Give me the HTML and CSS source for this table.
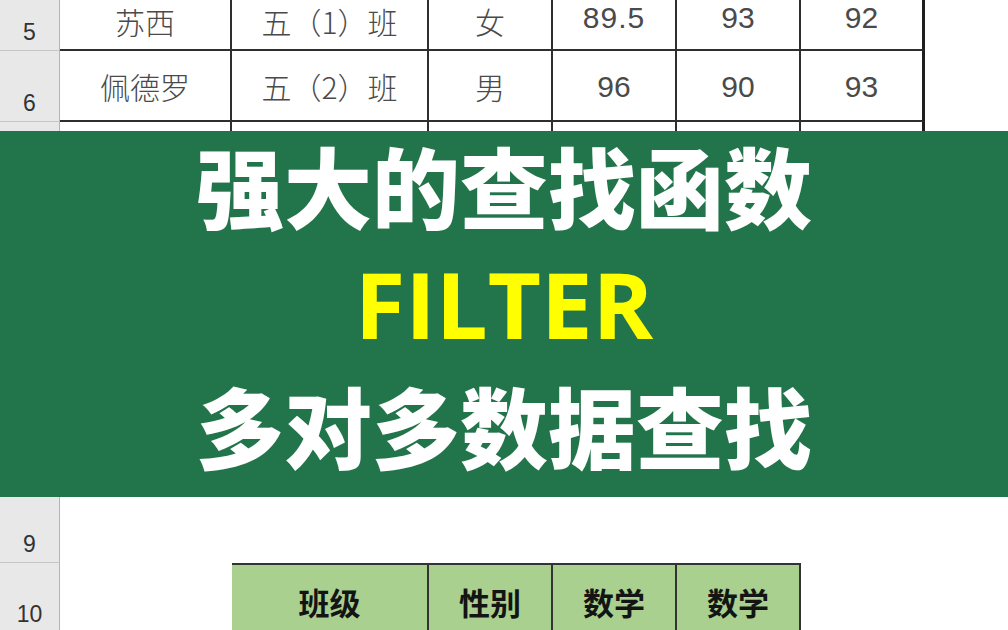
FILE: index.html
```html
<!DOCTYPE html>
<html lang="zh-CN">
<head>
<meta charset="utf-8">
<title>FILTER 多对多数据查找</title>
<link rel="stylesheet" href="styles.css">
</head>
<body>
<div class="sheet">
  <div class="row r5">
    <div class="rh">5</div>
    <div class="c cn">苏西</div>
    <div class="c cn">五（1）班</div>
    <div class="c cn">女</div>
    <div class="c num mono">89.5</div>
    <div class="c num">93</div>
    <div class="c num last">92</div>
    <div class="blank"></div>
  </div>
  <div class="row r6">
    <div class="rh">6</div>
    <div class="c cn">佩德罗</div>
    <div class="c cn">五（2）班</div>
    <div class="c cn">男</div>
    <div class="c num">96</div>
    <div class="c num">90</div>
    <div class="c num last">93</div>
    <div class="blank"></div>
  </div>
  <div class="row r7">
    <div class="rh"></div>
    <div class="c open"></div>
    <div class="c open"></div>
    <div class="c open"></div>
    <div class="c open"></div>
    <div class="c open"></div>
    <div class="c open last"></div>
    <div class="blank"></div>
  </div>
  <div class="banner">
    <div class="line cnline">强大的查找函数</div>
    <div class="line en">FILTER</div>
    <div class="line cnline">多对多数据查找</div>
  </div>
  <div class="row r9">
    <div class="rh">9</div>
  </div>
  <div class="row r10">
    <div class="rh">10</div>
    <div class="blank"></div>
    <div class="h">班级</div>
    <div class="h">性别</div>
    <div class="h">数学</div>
    <div class="h">数学</div>
    <div class="blank"></div>
  </div>
</div>
</body>
</html>
```
FILE: styles.css
```css
* { box-sizing: border-box; }
html, body { margin: 0; padding: 0; background: #fff; }
body { width: 1008px; height: 630px; overflow: hidden; }

.sheet {
  height: 630px;
  overflow: hidden;
  display: flex;
  flex-direction: column;
}

.row {
  display: grid;
  grid-template-columns: 60px 172px 197px 124px 124px 124px 124px 1fr;
  flex: none;
}

.r5 { height: 51px; }
.r6 { height: 71px; }
.r7 { height: 9px; }
.r9 { height: 66px; }
.r10 { height: 70px; }

.rh {
  background: #e8e8e8;
  border-right: 1px solid #b4b4b4;
  border-bottom: 1px solid #c6c6c6;
  display: flex;
  align-items: flex-end;
  justify-content: center;
  padding-bottom: 6px;
  font-family: "Liberation Sans", Arial, sans-serif;
  font-size: 23px;
  line-height: 1;
  color: #333;
}
.r7 .rh { border-bottom: none; }

.c {
  border-right: 2px solid #2e2e2e;
  border-bottom: 2px solid #2e2e2e;
  display: flex;
  align-items: center;
  justify-content: center;
  color: #4a4a4a;
  font-size: 30px;
  line-height: 1;
}
.r5 .c { padding-bottom: 8px; }
.c.open { border-bottom: none; }
.c.last { border-right-width: 3px; border-right-color: #1e1e1e; }

.cn {
  font-family: "Noto Sans CJK SC", "Noto Sans CJK JP", sans-serif;
  font-weight: 300;
}
.num {
  font-family: "Liberation Sans", Arial, sans-serif;
  padding-top: 2px;
}
.r5 .num { padding-top: 0; padding-bottom: 14px; }
.mono { letter-spacing: 1px; }

.blank { background: #fff; }

.banner {
  flex: none;
  height: 366px;
  background: #22744a;
  display: flex;
  flex-direction: column;
  align-items: center;
  justify-content: center;
  padding-bottom: 20px;
}
.line {
  height: 120px;
  line-height: 120px;
  text-align: center;
  white-space: nowrap;
}
.cnline {
  font-family: "Noto Sans CJK SC", "Noto Sans CJK JP", sans-serif;
  font-weight: 900;
  font-size: 88px;
  color: #fff;
}
.en {
  font-family: "Open Sans", "Liberation Sans", sans-serif;
  font-weight: 700;
  font-size: 92px;
  color: #ffff00;
}

.h {
  background: #a9d08e;
  border-top: 2px solid #333;
  border-right: 2px solid #333;
  display: flex;
  align-items: center;
  justify-content: center;
  font-family: "Noto Sans CJK SC", "Noto Sans CJK JP", sans-serif;
  font-weight: 700;
  font-size: 31px;
  color: #141414;
  padding-top: 4px;
}
.r10 .h:first-of-type { border-left: 2px solid #333; }
```
